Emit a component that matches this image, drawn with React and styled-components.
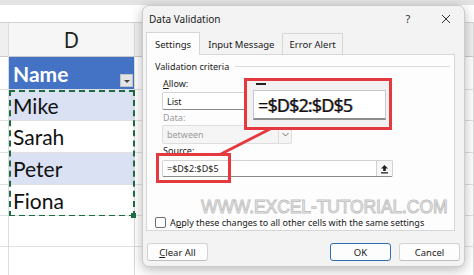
import styled, { createGlobalStyle } from "styled-components";

const GlobalStyle = createGlobalStyle`
  html, body { margin: 0; padding: 0; }
  body {
    width: 474px;
    height: 275px;
    overflow: hidden;
    background: #fff;
    font-family: "Noto Sans", "Open Sans", sans-serif;
  }
`;

const Page = styled.div`
  position: relative;
  width: 474px;
  height: 275px;
  overflow: hidden;
  background: #fff;
`;

/* ---------- spreadsheet ---------- */

const Sheet = styled.div`
  display: flex;
  flex-direction: column;
  height: 100%;
`;

const TopStrip = styled.div`
  height: 5px;
  flex-shrink: 0;
  background: #e3e3e3;
`;

const FormulaBar = styled.div`
  height: 17px;
  flex-shrink: 0;
  background: #fff;
  border-bottom: 1px solid #d2d2d2;
`;

const Columns = styled.div`
  display: flex;
  flex: 1;
  min-height: 0;
`;

const Column = styled.div`
  width: ${(p) => p.$w || "auto"};
  flex: ${(p) => (p.$w ? "none" : 1)};
  display: flex;
  flex-direction: column;
  border-right: 1px solid #dcdcdc;
`;

const ColHeader = styled.div`
  height: 34px;
  flex-shrink: 0;
  box-sizing: border-box;
  background: ${(p) => (p.$active ? "#f6f6f6" : "#efefef")};
  border-bottom: 1px solid #c9c9c9;
  display: flex;
  align-items: center;
  justify-content: center;
  font-family: "Noto Sans", sans-serif;
  font-size: 21px;
  color: #1f1f1f;
`;

const Cell = styled.div`
  position: relative;
  height: ${(p) => p.$h}px;
  flex-shrink: 0;
  box-sizing: border-box;
  border-bottom: 1px solid #e0e0e0;
  background: ${(p) => p.$bg || "#fff"};
  display: flex;
  align-items: center;
  padding-left: 4px;
  font-family: "Lato", "Noto Sans", sans-serif;
  font-size: 21px;
  font-weight: ${(p) => (p.$bold ? 700 : 400)};
  color: ${(p) => (p.$bold ? "#fff" : "#111")};
`;

const FilterButton = styled.div`
  position: absolute;
  right: 1px;
  bottom: 2px;
  width: 13px;
  height: 13px;
  background: #e4e4e4;
  border: 1px solid #c4c4c4;
  box-sizing: border-box;
  display: flex;
  align-items: center;
  justify-content: center;
  &::after {
    content: "";
    border-left: 3px solid transparent;
    border-right: 3px solid transparent;
    border-top: 3px solid #444;
    margin-top: 2px;
  }
`;

const CopyRange = styled.div`
  position: relative;
  flex-shrink: 0;
  display: flex;
  flex-direction: column;
  &::after {
    content: "";
    position: absolute;
    inset: 0 -1px -1px 0;
    border: 2px dashed #1d6b43;
    pointer-events: none;
  }
`;

const FillHandle = styled.div`
  position: absolute;
  right: -2px;
  bottom: -2px;
  width: 5px;
  height: 5px;
  background: #1d6b43;
  z-index: 1;
`;

/* ---------- dialog ---------- */

const Dialog = styled.div`
  position: absolute;
  left: 142px;
  top: 5px;
  width: 323px;
  height: 262px;
  box-sizing: border-box;
  background: #f3f3f3;
  border: 1px solid #cbcbcb;
  border-radius: 7px;
  box-shadow: 0 3px 12px rgba(0, 0, 0, 0.28);
  display: flex;
  flex-direction: column;
  font-size: 9px;
  color: #1a1a1a;
`;

const TitleBar = styled.div`
  height: 25px;
  display: flex;
  align-items: center;
  padding: 0 12px 0 6px;
  font-size: 10px;
`;

const Title = styled.span`
  flex: 1;
`;

const TitleIcon = styled.span`
  width: 12px;
  display: flex;
  justify-content: center;
  margin-left: ${(p) => p.$gap || 0}px;
  font-size: 11px;
  color: #333;
`;

const TabRow = styled.div`
  display: flex;
  height: 23px;
  margin-left: 3px;
  align-items: flex-end;
`;

const Tab = styled.div`
  height: ${(p) => (p.$active ? 23 : 21)}px;
  box-sizing: border-box;
  padding: 0 ${(p) => p.$pad || 8}px;
  display: flex;
  align-items: center;
  background: ${(p) => (p.$active ? "#fdfdfd" : "transparent")};
  border: 1px solid ${(p) => (p.$line ? "#d6d6d6" : "transparent")};
  border-bottom: none;
  margin-bottom: ${(p) => (p.$active ? -1 : 0)}px;
  position: relative;
  z-index: ${(p) => (p.$active ? 1 : 0)};
  font-size: 9.5px;
`;

const Panel = styled.div`
  margin: 0 9px 0 3px;
  height: 177px;
  box-sizing: border-box;
  background: #fdfdfd;
  border: 1px solid #d6d6d6;
  display: flex;
  flex-direction: column;
  padding: 5px 0 0 8px;
`;

const Legend = styled.div`
  display: flex;
  align-items: center;
  gap: 6px;
  height: 13px;
  padding-right: 4px;
  &::after {
    content: "";
    flex: 1;
    height: 1px;
    background: #dcdcdc;
  }
`;

const FieldLabel = styled.div`
  height: 12px;
  line-height: 12px;
  margin: ${(p) => p.$mt || 0}px 0 0 8px;
  color: ${(p) => (p.$muted ? "#9b9b9b" : "#1a1a1a")};
`;

const Key = styled.span`
  text-decoration: underline;
`;

const Field = styled.div`
  width: ${(p) => p.$w}px;
  height: ${(p) => p.$h}px;
  box-sizing: border-box;
  margin: ${(p) => p.$mt || 0}px 0 0 7px;
  background: ${(p) => (p.$disabled ? "#f5f5f5" : "#fff")};
  border: 1px solid ${(p) => (p.$disabled ? "#dedede" : "#d2d2d2")};
  border-bottom-color: ${(p) => (p.$disabled ? "#dedede" : "#8a8a8a")};
  border-radius: 2px;
  display: flex;
  align-items: center;
  padding-left: 4px;
  color: ${(p) => (p.$disabled ? "#9b9b9b" : "#1a1a1a")};
`;

const FieldText = styled.span`
  flex: 1;
`;

const Chevron = styled.div`
  width: 12px;
  height: 100%;
  border-left: 1px solid #dcdcdc;
  display: flex;
  align-items: center;
  justify-content: center;
`;

const RefButton = styled.div`
  width: 16px;
  height: 100%;
  box-sizing: border-box;
  border-left: 1px solid #d2d2d2;
  display: flex;
  align-items: center;
  justify-content: center;
  background: #f7f7f7;
`;

const CheckRow = styled.div`
  display: flex;
  align-items: center;
  gap: 4px;
  margin-top: 39px;
  font-size: 9px;
`;

const Checkbox = styled.div`
  width: 11px;
  height: 11px;
  box-sizing: border-box;
  border: 1px solid #6d6d6d;
  border-radius: 2px;
  background: #fff;
`;

const ButtonRow = styled.div`
  display: flex;
  align-items: center;
  padding: 12px 4px 0 4px;
  gap: 8px;
`;

const Button = styled.div`
  width: 61px;
  height: 18px;
  box-sizing: border-box;
  background: #fdfdfd;
  border: 1px solid ${(p) => (p.$primary ? "#2f6fb5" : "#d3d3d3")};
  border-bottom-color: ${(p) => (p.$primary ? "#2f6fb5" : "#bdbdbd")};
  border-radius: 3px;
  display: flex;
  align-items: center;
  justify-content: center;
  font-size: 9.5px;
  margin-left: ${(p) => (p.$push ? "auto" : 0)};
`;

/* ---------- annotations ---------- */

const Callout = styled.div`
  position: absolute;
  left: 244px;
  top: 78px;
  width: 148px;
  height: 52px;
  box-sizing: border-box;
  border: 3px solid #e6393f;
  background: #f1f1f1;
  padding: 2px 3px 0 6px;
  display: flex;
  flex-direction: column;
`;

const MiniBar = styled.div`
  width: 10px;
  height: 2px;
  background: #222;
  margin-left: 3px;
`;

const BigInput = styled.div`
  margin-top: 5px;
  height: 30px;
  box-sizing: border-box;
  background: #fff;
  border: 1px solid #c9c9c9;
  border-bottom: 2px solid #8d8d8d;
  display: flex;
  align-items: center;
  padding-left: 4px;
  font-family: "Noto Sans", sans-serif;
  font-size: 18px;
  letter-spacing: -0.9px;
  color: #111;
  text-shadow: -0.6px 0 rgba(220, 120, 0, 0.5), 0.6px 0 rgba(0, 90, 220, 0.5);
`;

const SourceMark = styled.div`
  position: absolute;
  left: 156px;
  top: 153px;
  width: 75px;
  height: 30px;
  box-sizing: border-box;
  border: 3px solid #e6393f;
`;

const Overlay = styled.svg`
  position: absolute;
  left: 0;
  top: 0;
  pointer-events: none;
`;

const Watermark = styled.div`
  position: absolute;
  left: 201px;
  top: 197px;
  font-family: "Liberation Sans", sans-serif;
  font-size: 17.5px;
  letter-spacing: -0.1px;
  color: rgba(255, 255, 255, 0.6);
  -webkit-text-stroke: 1px #c2c2c2;
  pointer-events: none;
`;

const rows = [
  { h: 31, bg: "#d9e1f2", text: "Mike" },
  { h: 32, bg: "#fff", text: "Sarah" },
  { h: 32, bg: "#d9e1f2", text: "Peter" },
  { h: 31, bg: "#fff", text: "Fiona" },
];

const plainRows = [33, 31, 32, 32, 31, 31, 40];

export default function App() {
  return (
    <Page>
      <GlobalStyle />
      <Sheet>
        <TopStrip />
        <FormulaBar />
        <Columns>
          <Column $w="8px">
            <ColHeader />
            {plainRows.map((h, i) => (
              <Cell key={i} $h={h} />
            ))}
          </Column>
          <Column $w="125px">
            <ColHeader $active>D</ColHeader>
            <Cell $h={33} $bg="#4472c4" $bold>
              Name
              <FilterButton />
            </Cell>
            <CopyRange>
              {rows.map((r) => (
                <Cell key={r.text} $h={r.h} $bg={r.bg}>
                  {r.text}
                </Cell>
              ))}
              <FillHandle />
            </CopyRange>
            <Cell $h={31} />
            <Cell $h={40} />
          </Column>
          <Column>
            <ColHeader />
            {plainRows.map((h, i) => (
              <Cell key={i} $h={h} />
            ))}
          </Column>
        </Columns>
      </Sheet>

      <Dialog>
        <TitleBar>
          <Title>Data Validation</Title>
          <TitleIcon>?</TitleIcon>
          <TitleIcon $gap={26}>
            <svg width="10" height="10" viewBox="0 0 10 10">
              <path d="M1 1 L9 9 M9 1 L1 9" stroke="#333" strokeWidth="1" />
            </svg>
          </TitleIcon>
        </TitleBar>
        <TabRow>
          <Tab $active $line>Settings</Tab>
          <Tab $pad={7}>Input Message</Tab>
          <Tab $line $pad={6}>Error Alert</Tab>
        </TabRow>
        <Panel>
          <Legend>Validation criteria</Legend>
          <FieldLabel $mt={5}>
            <Key>A</Key>llow:
          </FieldLabel>
          <Field $w={130} $h={18} $mt={2}>
            <FieldText>List</FieldText>
          </Field>
          <FieldLabel $mt={2} $muted>
            Data:
          </FieldLabel>
          <Field $w={130} $h={19} $mt={1} $disabled>
            <FieldText>between</FieldText>
            <Chevron>
              <svg width="7" height="5" viewBox="0 0 7 5">
                <path d="M0.5 1 L3.5 4 L6.5 1" fill="none" stroke="#777" strokeWidth="1" />
              </svg>
            </Chevron>
          </Field>
          <FieldLabel $mt={1}>
            <Key>S</Key>ource:
          </FieldLabel>
          <Field $w={231} $h={17} $mt={3}>
            <FieldText>=$D$2:$D$5</FieldText>
            <RefButton>
              <svg width="9" height="10" viewBox="0 0 9 10">
                <path d="M4.5 1 L1 4.5 H3.2 V7 H5.8 V4.5 H8 Z" fill="#222" />
                <rect x="1" y="8.2" width="7" height="1.3" fill="#222" />
              </svg>
            </RefButton>
          </Field>
          <CheckRow>
            <Checkbox />
            <span>
              A<Key>p</Key>ply these changes to all other cells with the same settings
            </span>
          </CheckRow>
        </Panel>
        <ButtonRow>
          <Button>
            <span>
              <Key>C</Key>lear All
            </span>
          </Button>
          <Button $primary $push>
            OK
          </Button>
          <Button>Cancel</Button>
        </ButtonRow>
      </Dialog>

      <Watermark>WWW.EXCEL-TUTORIAL.COM</Watermark>

      <Overlay width="474" height="275">
        <line x1="221" y1="154" x2="272" y2="128" stroke="#e6393f" strokeWidth="3" />
      </Overlay>
      <SourceMark />
      <Callout>
        <MiniBar />
        <BigInput>=$D$2:$D$5</BigInput>
      </Callout>
    </Page>
  );
}
